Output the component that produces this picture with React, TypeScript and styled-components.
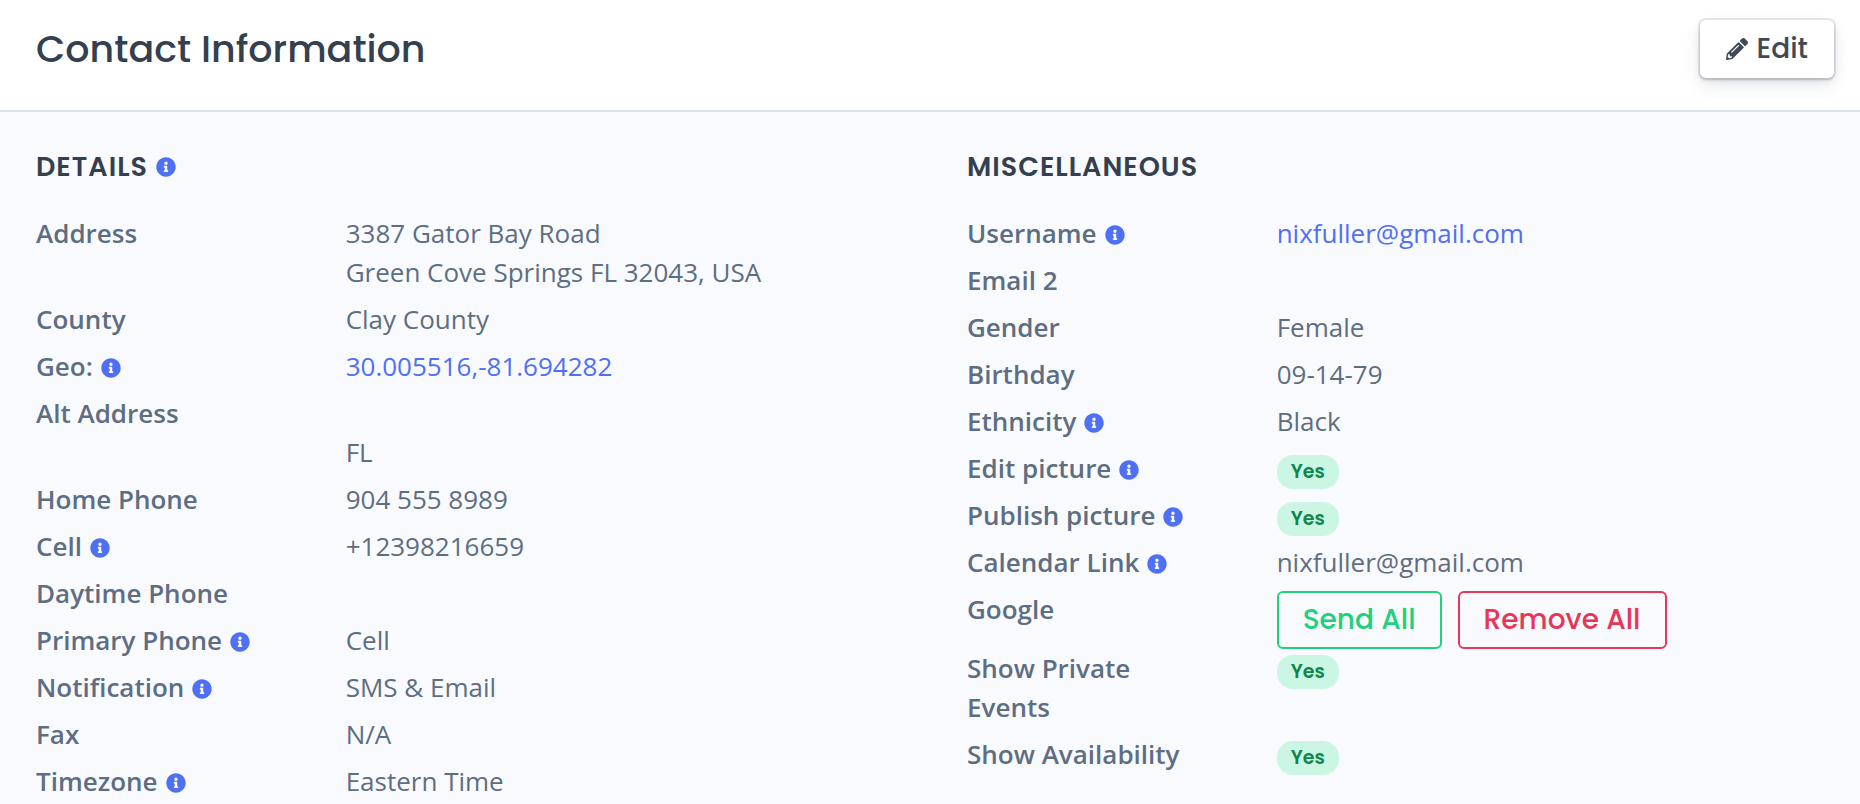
import React from 'react';
import styled, { createGlobalStyle } from 'styled-components';
import { FaInfoCircle, FaPencilAlt } from 'react-icons/fa';

const GlobalStyle = createGlobalStyle`
  *, *::before, *::after { box-sizing: border-box; }
  body {
    margin: 0;
    background: #f9fafd;
    color: #5e6e82;
    font-family: 'Open Sans', sans-serif;
    font-size: 26px;
    line-height: 39px;
  }
`;

const headingFont = "Poppins, Inter, sans-serif";

const Header = styled.header`
  display: flex;
  align-items: flex-start;
  justify-content: space-between;
  min-height: 112px;
  padding: 20px 26px 0 36px;
  background: #fff;
  border-bottom: 2px solid #d8e2ef;
`;

const Title = styled.h1`
  margin: 0;
  color: #344050;
  font: 500 38px/58px ${headingFont};
`;

const EditButton = styled.button`
  display: flex;
  align-items: center;
  justify-content: center;
  gap: 9px;
  height: 58px;
  padding: 0 26px;
  border: 0;
  border-radius: 6px;
  background: #fff;
  color: #404a57;
  font: 500 28px/58px ${headingFont};
  box-shadow:
    0 0 0 2px rgba(43, 45, 80, 0.1),
    0 4px 10px rgba(43, 45, 80, 0.08),
    0 8px 20px rgba(43, 45, 80, 0.08),
    0 2px 3px rgba(0, 0, 0, 0.08),
    0 2px 4px rgba(0, 0, 0, 0.08);
  cursor: pointer;

  svg { width: 22px; height: 22px; }
`;

const Columns = styled.main`
  display: grid;
  grid-template-columns: repeat(2, minmax(0, 1fr));
  column-gap: 2px;
`;

const SectionTitle = styled.h2`
  display: flex;
  align-items: center;
  gap: 8px;
  margin: 0;
  padding: 37px 36px 29px;
  color: #344050;
  font: 600 27px/36px ${headingFont};
  letter-spacing: 1px;
  text-transform: uppercase;
`;

const Info = styled(FaInfoCircle)`
  width: 20px;
  height: 20px;
  color: #4f6ff5;
`;

const LabelInfo = styled(Info)`
  margin-left: 8px;
  vertical-align: -2px;
`;

const List = styled.dl`
  margin: 0;
`;

const Row = styled.div`
  display: grid;
  grid-template-columns: minmax(0, 1fr) minmax(0, 2fr);
`;

const Label = styled.dt`
  padding: 0 36px 8px;
  font-weight: 600;
`;

const Value = styled.dd<{ $flush?: boolean }>`
  margin: 0;
  padding: ${(p) => (p.$flush ? '1px 36px 0' : '0 36px 8px')};
  min-height: 39px;
`;

const Line = styled.div`
  min-height: 39px;
`;

const Link = styled.a`
  color: #4f6ff5;
  text-decoration: none;
`;

const Badge = styled.span`
  display: block;
  width: fit-content;
  margin-top: 5px;
  padding: 0 14px;
  border-radius: 16px;
  background: #ccf6e4;
  color: #0e864e;
  font: 600 19px/34px ${headingFont};
`;

const Actions = styled.div`
  display: flex;
  gap: 16px;
`;

const OutlineButton = styled.button<{ $color: string }>`
  height: 58px;
  padding: 0 24px;
  border: 2px solid ${(p) => p.$color};
  border-radius: 6px;
  background: transparent;
  color: ${(p) => p.$color};
  font: 500 28px/54px ${headingFont};
  cursor: pointer;
`;

type Field = {
  label: string;
  info?: boolean;
  value?: React.ReactNode;
  flush?: boolean;
};

const yes = <Badge>Yes</Badge>;

const details: Field[] = [
  {
    label: 'Address',
    value: (
      <>
        <Line>3387 Gator Bay Road</Line>
        <Line>Green Cove Springs FL 32043, USA</Line>
      </>
    ),
  },
  { label: 'County', value: 'Clay County' },
  { label: 'Geo:', info: true, value: <Link href="#map">30.005516,-81.694282</Link> },
  {
    label: 'Alt Address',
    value: (
      <>
        <Line />
        <Line>FL</Line>
      </>
    ),
  },
  { label: 'Home Phone', value: '904 555 8989' },
  { label: 'Cell', info: true, value: '+12398216659' },
  { label: 'Daytime Phone' },
  { label: 'Primary Phone', info: true, value: 'Cell' },
  { label: 'Notification', info: true, value: 'SMS & Email' },
  { label: 'Fax', value: 'N/A' },
  { label: 'Timezone', info: true, value: 'Eastern Time' },
];

const miscellaneous: Field[] = [
  {
    label: 'Username',
    info: true,
    value: <Link href="mailto:nixfuller@gmail.com">nixfuller@gmail.com</Link>,
  },
  { label: 'Email 2' },
  { label: 'Gender', value: 'Female' },
  { label: 'Birthday', value: '09-14-79' },
  { label: 'Ethnicity', info: true, value: 'Black' },
  { label: 'Edit picture', info: true, value: yes, flush: true },
  { label: 'Publish picture', info: true, value: yes, flush: true },
  { label: 'Calendar Link', info: true, value: 'nixfuller@gmail.com' },
  {
    label: 'Google',
    flush: true,
    value: (
      <Actions>
        <OutlineButton type="button" $color="#1fd17c">Send All</OutlineButton>
        <OutlineButton type="button" $color="#e63757">Remove All</OutlineButton>
      </Actions>
    ),
  },
  { label: 'Show Private Events', value: yes, flush: true },
  { label: 'Show Availability', value: yes, flush: true },
];

function Section({ title, info, fields }: { title: string; info?: boolean; fields: Field[] }) {
  return (
    <section>
      <SectionTitle>
        {title}
        {info && <Info aria-hidden />}
      </SectionTitle>
      <List>
        {fields.map((field) => (
          <Row key={field.label}>
            <Label>
              {field.label}
              {field.info && <LabelInfo aria-hidden />}
            </Label>
            <Value $flush={field.flush}>{field.value}</Value>
          </Row>
        ))}
      </List>
    </section>
  );
}

export default function App() {
  return (
    <>
      <GlobalStyle />
      <Header>
        <Title>Contact Information</Title>
        <EditButton type="button">
          <FaPencilAlt aria-hidden />
          Edit
        </EditButton>
      </Header>
      <Columns>
        <Section title="Details" info fields={details} />
        <Section title="Miscellaneous" fields={miscellaneous} />
      </Columns>
    </>
  );
}
